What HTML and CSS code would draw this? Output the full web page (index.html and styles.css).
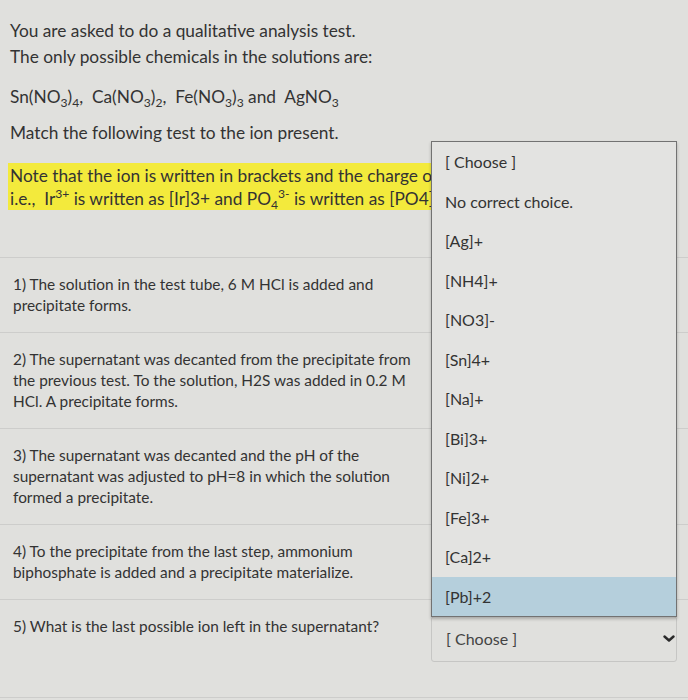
FILE: index.html
```html
<!DOCTYPE html>
<html lang="en">
<head>
<meta charset="utf-8">
<title>Qualitative analysis</title>
<link rel="stylesheet" href="styles.css">
</head>
<body>
<div class="page">
  <div class="intro">
    <p class="lead">You are asked to do a qualitative analysis test.<br>The only possible chemicals in the solutions are:</p>
    <p class="chem">Sn(NO<sub>3</sub>)<sub>4</sub>,&nbsp; Ca(NO<sub>3</sub>)<sub>2</sub>,&nbsp; Fe(NO<sub>3</sub>)<sub>3</sub> and&nbsp; AgNO<sub>3</sub></p>
    <p class="match">Match the following test to the ion present.</p>
    <p class="note"><span class="hl">Note that the ion is written in brackets and the charge of the ion<br>i.e.,&nbsp; Ir<sup>3+</sup> is written as [Ir]3+ and PO<sub>4</sub><sup>3-</sup> is written as [PO4]3-.</span></p>
  </div>

  <div class="rows">
    <div class="row">
      <div class="q">1) The solution in the test tube, 6 M HCl is added and precipitate forms.</div>
      <div class="ans"></div>
    </div>
    <div class="row">
      <div class="q">2) The supernatant was decanted from the precipitate from the previous test. To the solution, H2S was added in 0.2 M HCl. A precipitate forms.</div>
      <div class="ans"></div>
    </div>
    <div class="row">
      <div class="q">3) The supernatant was decanted and the pH of the supernatant was adjusted to pH=8 in which the solution formed a precipitate.</div>
      <div class="ans"></div>
    </div>
    <div class="row">
      <div class="q">4) To the precipitate from the last step, ammonium biphosphate is added and a precipitate materialize.</div>
      <div class="ans"></div>
    </div>
    <div class="row last">
      <div class="q">5) What is the last possible ion left in the supernatant?</div>
      <div class="ans">
        <div class="select">
          <span>[ Choose ]</span>
          <svg class="chev" width="12" height="7" viewBox="0 0 12 7"><polyline points="1.5,1.5 6,5.5 10.5,1.5" fill="none" stroke="#2a2a2a" stroke-width="2.4" stroke-linecap="round" stroke-linejoin="round"/></svg>
        </div>
      </div>
    </div>
  </div>

  <ul class="listbox">
    <li>[ Choose ]</li>
    <li>No correct choice.</li>
    <li>[Ag]+</li>
    <li>[NH4]+</li>
    <li>[NO3]-</li>
    <li>[Sn]4+</li>
    <li>[Na]+</li>
    <li>[Bi]3+</li>
    <li>[Ni]2+</li>
    <li>[Fe]3+</li>
    <li>[Ca]2+</li>
    <li class="active">[Pb]+2</li>
  </ul>
</div>
</body>
</html>
```

FILE: styles.css
```css
html, body {
  margin: 0;
  padding: 0;
  background: #e0e0dd;
}
body {
  font-family: Lato, "Open Sans", "Liberation Sans", sans-serif;
  color: #333;
  width: 688px;
  height: 700px;
  overflow: hidden;
}
.page {
  position: relative;
  width: 688px;
  height: 700px;
  overflow: hidden;
}
.intro {
  padding: 18px 0 0 10px;
  font-size: 17.3px;
  white-space: nowrap;
}
.intro p {
  margin: 0;
  line-height: 25.6px;
}
sub, sup {
  font-size: 0.7em;
  line-height: 0;
}
.intro .chem {
  margin-top: 14.5px;
}
.intro .match {
  margin-top: 11px;
}
.intro .note {
  margin-top: 17.7px;
  margin-left: -2px;
  line-height: 23px;
}
.hl {
  background: #f3ea3c;
  padding: 1.5px 2px;
  -webkit-box-decoration-break: clone;
  box-decoration-break: clone;
}
.rows {
  margin-top: 47px;
}
.row {
  display: grid;
  grid-template-columns: 1fr 246px;
  column-gap: 3px;
  padding: 16px 11px 16px 13px;
  border-top: 1px solid #cdcdcb;
}
.row.last {
  padding-bottom: 35px;
  border-bottom: 1px solid #cdcdcb;
}
.q {
  font-size: 15.4px;
  line-height: 21px;
}
.select {
  box-sizing: border-box;
  height: 46px;
  border: 1px solid #c6c6c4;
  border-radius: 3px;
  display: flex;
  align-items: center;
  justify-content: space-between;
  padding: 0 1px 0 14px;
  font-size: 16px;
  color: #444;
}
.chev {
  display: block;
}
.listbox {
  position: absolute;
  left: 431px;
  top: 141px;
  width: 246px;
  box-sizing: border-box;
  margin: 0;
  padding: 0;
  list-style: none;
  background: #e3e3e1;
  border: 1px solid #727272;
  box-shadow: 0 2px 3px rgba(0, 0, 0, 0.25);
  font-size: 16px;
  color: #333;
}
.listbox li {
  height: 39.5px;
  line-height: 39.5px;
  padding-left: 13px;
}
.listbox li.active {
  background: #b5cfdc;
}
```
